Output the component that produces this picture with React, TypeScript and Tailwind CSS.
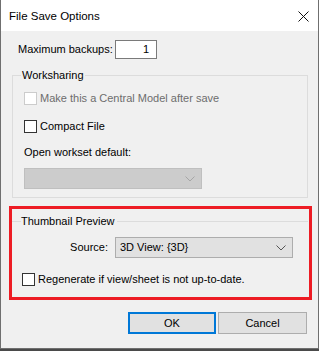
import React from 'react';

const font = { fontFamily: '"Liberation Sans", Arial, sans-serif' };

function Chevron({ color }: { color: string }) {
  return (
    <svg width="10" height="6" viewBox="0 0 10 6" className="shrink-0">
      <polyline points="0.5,0.5 5,5 9.5,0.5" fill="none" stroke={color} strokeWidth="1" />
    </svg>
  );
}

function Checkbox({ disabled }: { disabled?: boolean }) {
  return (
    <div
      className={
        'w-[13px] h-[13px] shrink-0 bg-white border ' +
        (disabled ? 'border-[#cccccc]' : 'border-[#333333]')
      }
    />
  );
}

export default function App() {
  return (
    <div className="w-[319px] h-[351px] bg-[#4a4a4a] text-[11px] text-black" style={font}>
      <div className="w-[319px] h-[349px] border-x border-b border-[#6f6f6f] bg-[#f0f0f0] flex flex-col">
        {/* title bar */}
        <div className="h-[31px] bg-white flex items-center justify-between pl-[8px] pr-[9px] shrink-0">
          <span className="text-[11.5px] pt-[2px]">File Save Options</span>
          <svg width="11" height="11" viewBox="0 0 11 11" className="mt-[1px]">
            <path d="M0.5 0.5 L10.5 10.5 M10.5 0.5 L0.5 10.5" stroke="#111" strokeWidth="1" />
          </svg>
        </div>

        {/* maximum backups */}
        <div className="mt-[9px] flex items-center pl-[17px]">
          <span className="w-[97px]">Maximum backups:</span>
          <div className="w-[42px] h-[19px] border border-[#7a7a7a] bg-white flex items-center justify-end pr-[7px]">
            1
          </div>
        </div>

        {/* worksharing group */}
        <div className="relative mt-[16px] ml-[11px] w-[296px] h-[123px] border border-[#dcdcdc] pt-[16px] pl-[11px]">
          <span className="absolute left-[8px] top-[-8px] px-[1px] bg-[#f0f0f0] leading-[14px]">Worksharing</span>
          <div className="flex items-center h-[13px]">
            <Checkbox disabled />
            <span className="ml-[3px] text-[#6d6d6d]">Make this a Central Model after save</span>
          </div>
          <div className="flex items-center h-[13px] mt-[15px]">
            <Checkbox />
            <span className="ml-[3px]">Compact File</span>
          </div>
          <div className="mt-[12px] leading-[15px]">Open workset default:</div>
          <div className="mt-[8px] w-[178px] h-[21px] bg-[#cccccc] border border-[#bfbfbf] flex items-center justify-end pr-[6px]">
            <Chevron color="#a6a6a6" />
          </div>
        </div>

        {/* thumbnail preview (highlighted) */}
        <div className="mt-[8px] ml-[8px] w-[303px] h-[94px] border-[3px] border-[#ed1c24] shrink-0">
          <div className="relative mt-[12px] w-[296px] border-t border-[#dcdcdc]">
            <span className="absolute left-[9px] top-[-8px] pr-[2px] bg-[#f0f0f0] leading-[14px]">Thumbnail Preview</span>
          </div>
          <div className="mt-[15px] flex items-center">
            <span className="w-[96px] text-right">Source:</span>
            <div className="ml-[7px] w-[178px] h-[21px] bg-[#e1e1e1] border border-[#adadad] flex items-center justify-between pl-[4px] pr-[6px]">
              <span>3D View: {'{3D}'}</span>
              <Chevron color="#555555" />
            </div>
          </div>
          <div className="mt-[15px] ml-[10px] flex items-center h-[13px]">
            <Checkbox />
            <span className="ml-[3px]">Regenerate if view/sheet is not up-to-date.</span>
          </div>
        </div>

        {/* buttons */}
        <div className="mt-[12px] flex pl-[127px]">
          <div className="w-[88px] h-[22px] bg-[#e1e1e1] border-2 border-[#0078d7] flex items-center justify-center">
            OK
          </div>
          <div className="ml-[2px] w-[89px] h-[22px] bg-[#e1e1e1] border border-[#adadad] flex items-center justify-center">
            Cancel
          </div>
        </div>
      </div>
    </div>
  );
}
